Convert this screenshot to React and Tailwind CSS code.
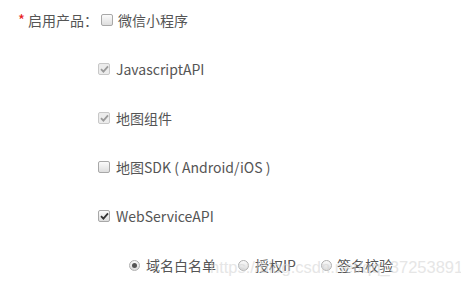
import React from 'react'

const Check = ({ checked, disabled }) => (
  <span
    className={`w-[12px] h-[12px] rounded-[2px] border flex items-center justify-center shrink-0 ${
      disabled ? 'border-[#c8c8c8] bg-[#ececec]' : 'border-[#a8a8a8] bg-gradient-to-b from-[#fbfbfb] to-[#dedede]'
    }`}
  >
    {checked && (
      <svg width="9" height="8" viewBox="0 0 9 8">
        <path
          d="M1 4.2 L3.4 6.6 L8 1.4"
          fill="none"
          stroke={disabled ? '#9a9a9a' : '#333'}
          strokeWidth="1.8"
        />
      </svg>
    )}
  </span>
)

const Radio = ({ checked }) => (
  <span className="w-[11px] h-[11px] rounded-full border border-[#b0b0b0] bg-gradient-to-b from-[#fbfbfb] to-[#dcdcdc] flex items-center justify-center shrink-0">
    {checked && <span className="w-[5px] h-[5px] rounded-full bg-[#555]" />}
  </span>
)

const Row = ({ children, className = '' }) => (
  <div className={`h-[20px] flex items-center ${className}`}>{children}</div>
)

const products = [
  { label: 'JavascriptAPI', checked: true, disabled: true },
  { label: '地图组件', checked: true, disabled: true },
  { label: '地图SDK ( Android/iOS )', checked: false },
  { label: 'WebServiceAPI', checked: true },
]

export default function App() {
  return (
    <div
      className="relative w-[461px] h-[288px] bg-white overflow-hidden text-[14px] text-[#555]"
      style={{ fontFamily: '"Noto Sans CJK SC", "Microsoft YaHei", sans-serif' }}
    >
      <div className="flex flex-col gap-[29px] pt-[10px]">
        <Row className="pl-[18px]">
          <span className="text-[#e8201a] text-[15px] leading-none mr-[3px] -mt-[1px]">*</span>
          <span>启用产品：</span>
          <span className="ml-[3px] flex items-center">
            <Check />
          </span>
          <span className="ml-[5px]">微信小程序</span>
        </Row>

        {products.map((p) => (
          <Row key={p.label} className="pl-[98px]">
            <Check checked={p.checked} disabled={p.disabled} />
            <span className="ml-[6px]">{p.label}</span>
          </Row>
        ))}

        <Row className="pl-[129px]">
          <Radio checked />
          <span className="ml-[6px]">域名白名单</span>
          <span className="ml-[22px] flex items-center">
            <Radio />
          </span>
          <span className="ml-[6px]">授权IP</span>
          <span className="ml-[25px] flex items-center">
            <Radio />
          </span>
          <span className="ml-[5px]">签名校验</span>
        </Row>
      </div>

      {/* watermark */}
      <div
        className="absolute left-[210px] top-[255px] text-[16.5px] text-[#d6d6d6] opacity-60 whitespace-nowrap pointer-events-none"
        style={{ fontFamily: '"Liberation Sans", Arial, sans-serif' }}
      >
        https://blog.csdn.net/qq_37253891
      </div>
    </div>
  )
}
